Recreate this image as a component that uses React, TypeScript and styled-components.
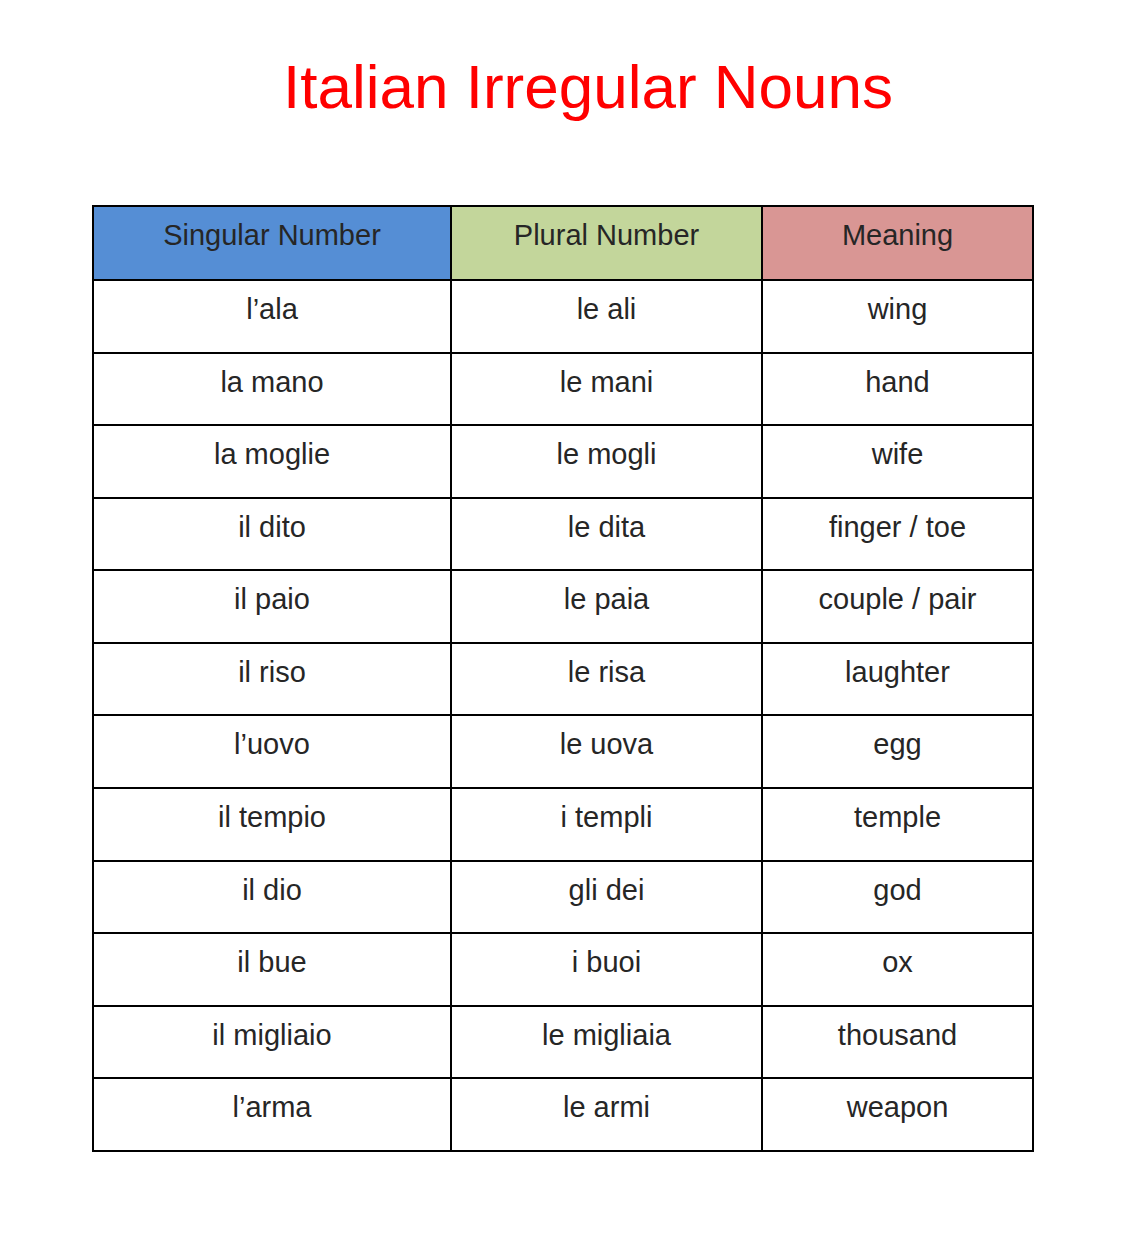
import React from "react";
import styled, { createGlobalStyle } from "styled-components";

const Global = createGlobalStyle`
  html, body { margin: 0; padding: 0; background: #ffffff; }
  body { font-family: "Liberation Sans", Arial, sans-serif; }
`;

const Page = styled.div`
  width: 1140px;
  min-height: 1245px;
  background: #ffffff;
  padding-top: 56px;
  box-sizing: border-box;
`;

const Title = styled.h1`
  margin: 0;
  padding-left: 36px;
  font-family: "Liberation Sans", Arial, sans-serif;
  font-weight: 400;
  font-size: 62px;
  line-height: 1;
  color: #ff0000;
  text-align: center;
`;

const Grid = styled.div`
  margin: 87px 0 0 92px;
  width: 942px;
  box-sizing: border-box;
  display: grid;
  grid-template-columns: 356px 309px 269px;
  grid-template-rows: 72px repeat(12, 70.58px);
  gap: 2px;
  padding: 2px;
  background: #000000;
`;

const Cell = styled.div<{ $bg?: string }>`
  background: ${(p) => p.$bg ?? "#ffffff"};
  display: flex;
  justify-content: center;
  align-items: flex-start;
  padding-top: 12px;
  box-sizing: border-box;
  font-size: 29px;
  line-height: 32px;
  color: #262626;
`;

const headers = [
  { label: "Singular Number", bg: "#558ed5" },
  { label: "Plural Number", bg: "#c3d69b" },
  { label: "Meaning", bg: "#d99694" },
];

const rows: [string, string, string][] = [
  ["l’ala", "le ali", "wing"],
  ["la mano", "le mani", "hand"],
  ["la moglie", "le mogli", "wife"],
  ["il dito", "le dita", "finger / toe"],
  ["il paio", "le paia", "couple / pair"],
  ["il riso", "le risa", "laughter"],
  ["l’uovo", "le uova", "egg"],
  ["il tempio", "i templi", "temple"],
  ["il dio", "gli dei", "god"],
  ["il bue", "i buoi", "ox"],
  ["il migliaio", "le migliaia", "thousand"],
  ["l’arma", "le armi", "weapon"],
];

export default function App() {
  return (
    <Page>
      <Global />
      <Title>Italian Irregular Nouns</Title>
      <Grid>
        {headers.map((h) => (
          <Cell key={h.label} $bg={h.bg}>
            {h.label}
          </Cell>
        ))}
        {rows.map((r) =>
          r.map((c, i) => <Cell key={r[0] + i}>{c}</Cell>)
        )}
      </Grid>
    </Page>
  );
}
